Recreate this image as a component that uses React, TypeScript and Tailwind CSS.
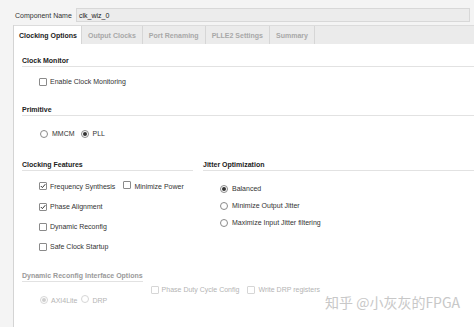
import React from 'react';

const font = { fontFamily: '"Liberation Sans", Arial, sans-serif' };

function Check({ checked = false, disabled = false }: { checked?: boolean; disabled?: boolean }) {
  return (
    <span
      className={`inline-flex h-[8px] w-[8px] shrink-0 items-center justify-center rounded-[1px] border bg-white ${
        disabled ? 'border-[#d6d6d6]' : 'border-[#8a8a8a]'
      }`}
    >
      {checked && (
        <svg width="6" height="6" viewBox="0 0 6 6">
          <path d="M0.8 3 L2.4 4.6 L5.3 1.2" fill="none" stroke="#333" strokeWidth="1" />
        </svg>
      )}
    </span>
  );
}

function Radio({ checked = false, disabled = false }: { checked?: boolean; disabled?: boolean }) {
  return (
    <span
      className={`inline-flex h-[8px] w-[8px] shrink-0 items-center justify-center rounded-full border bg-white ${
        disabled ? 'border-[#d6d6d6]' : 'border-[#8a8a8a]'
      }`}
    >
      {checked && (
        <span className={`h-[4px] w-[4px] rounded-full ${disabled ? 'bg-[#cfcfcf]' : 'bg-[#333]'}`} />
      )}
    </span>
  );
}

function Header({ title, className = '' }: { title: string; className?: string }) {
  return (
    <div className={`whitespace-nowrap border-b border-[#e2e2e2] pb-[1px] font-bold text-[#222] ${className}`}>
      {title}
    </div>
  );
}

const tabs = ['Clocking Options', 'Output Clocks', 'Port Renaming', 'PLLE2 Settings', 'Summary'];

export default function App() {
  return (
    <div
      className="relative flex h-[327px] w-[474px] flex-col overflow-hidden bg-[#f4f4f4] text-[7px] leading-[9px] text-[#333]"
      style={font}
    >
      {/* component name */}
      <div className="flex items-center pl-[15px] pt-[8px]">
        <span className="w-[61px] text-[#333]">Component Name</span>
        <div className="mr-[4px] flex h-[14px] flex-1 items-center border border-[#d8d8d8] bg-[#ececec] pl-[2px] text-[#222]">
          clk_wiz_0
        </div>
      </div>

      {/* tab panel */}
      <div className="ml-[13px] mt-[3px] flex flex-1 flex-col border-l border-[#d4d4d4] bg-white">
        <div className="flex h-[19px] border-t border-[#dcdcdc] bg-[#ebebeb]">
          {tabs.map((t, i) => (
            <div
              key={t}
              className={`flex items-center border-r border-[#d6d6d6] ${
                i === 0 ? 'w-[68px] bg-white pl-[5px] font-bold text-[#222]' : 'px-[6px] font-bold text-[#a8a8a8]'
              }`}
            >
              {t}
            </div>
          ))}
        </div>

        <div className="flex flex-col pl-[8px]">
          {/* Clock Monitor */}
          <Header title="Clock Monitor" className="mt-[12px]" />
          <div className="mt-[10px] flex items-center gap-[3px] pl-[17px]">
            <Check />
            <span>Enable Clock Monitoring</span>
          </div>

          {/* Primitive */}
          <Header title="Primitive" className="mt-[19px]" />
          <div className="mt-[13px] flex items-center pl-[18px]">
            <Radio />
            <span className="ml-[4px]">MMCM</span>
            <span className="ml-[6px]">
              <Radio checked />
            </span>
            <span className="ml-[4px]">PLL</span>
          </div>

          {/* Clocking Features / Jitter */}
          <div className="mt-[22px] flex">
            <div className="w-[171px]">
              <Header title="Clocking Features" />
              <div className="mt-[10px] flex flex-col gap-[11px] pl-[17px]">
                <div className="flex items-center">
                  <Check checked />
                  <span className="ml-[3px]">Frequency Synthesis</span>
                  <span className="ml-[8px]">
                    <Check />
                  </span>
                  <span className="ml-[3px]">Minimize Power</span>
                </div>
                <div className="flex items-center gap-[3px]">
                  <Check checked />
                  <span>Phase Alignment</span>
                </div>
                <div className="flex items-center gap-[3px]">
                  <Check />
                  <span>Dynamic Reconfig</span>
                </div>
                <div className="flex items-center gap-[3px]">
                  <Check />
                  <span>Safe Clock Startup</span>
                </div>
              </div>
            </div>
            <div className="ml-[10px] flex-1">
              <Header title="Jitter Optimization" />
              <div className="mt-[13px] flex flex-col gap-[8px] pl-[17px]">
                <div className="flex items-center gap-[4px]">
                  <Radio checked />
                  <span>Balanced</span>
                </div>
                <div className="flex items-center gap-[4px]">
                  <Radio />
                  <span>Minimize Output Jitter</span>
                </div>
                <div className="flex items-center gap-[4px]">
                  <Radio />
                  <span>Maximize Input Jitter filtering</span>
                </div>
              </div>
            </div>
          </div>

          {/* Dynamic reconfig interface */}
          <div className="mt-[20px] flex text-[#b4b4b4]">
            <div className="w-fit">
              <Header title="Dynamic Reconfig Interface Options" className="border-[#d0d0d0] !text-[#9a9a9a]" />
              <div className="mt-[13px] flex items-center pl-[18px]">
                <Radio checked disabled />
                <span className="ml-[3px]">AXI4Lite</span>
                <span className="ml-[4px]">
                  <Radio disabled />
                </span>
                <span className="ml-[3px]">DRP</span>
              </div>
            </div>
            <div className="ml-[8px] mt-[14px] flex items-start">
              <div className="flex items-center gap-[3px]">
                <Check disabled />
                <span>Phase Duty Cycle Config</span>
              </div>
              <div className="ml-[8px] flex items-center gap-[3px]">
                <Check disabled />
                <span>Write DRP registers</span>
              </div>
            </div>
          </div>
        </div>
      </div>

      {/* watermark */}
      <div
        className="absolute left-[325px] top-[294px] text-[14px] leading-[16px] text-[#c8c8c8]"
        style={{ fontFamily: '"Noto Sans CJK SC", "Liberation Sans", sans-serif' }}
      >
        知乎 @小灰灰的FPGA
      </div>
    </div>
  );
}
